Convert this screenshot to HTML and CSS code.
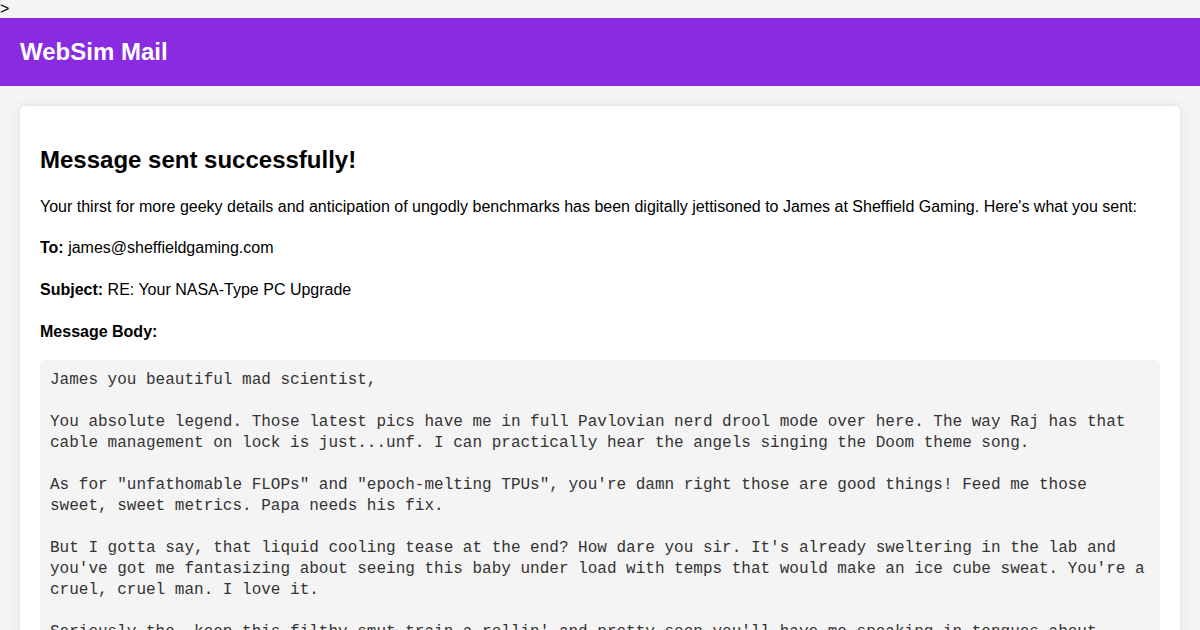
FILE: index.html
```html
<!DOCTYPE html>
<html>
<head>
<meta charset="utf-8">
<link rel="stylesheet" href="styles.css">
</head>
<body>
<div class="stray">&gt;</div>
<header class="topbar"><h1 class="brand">WebSim Mail</h1></header>
<main class="wrap">
  <section class="card">
    <h2 class="title">Message sent successfully!</h2>
    <p class="line">Your thirst for more geeky details and anticipation of ungodly benchmarks has been digitally jettisoned to James at Sheffield Gaming. Here's what you sent:</p>
    <p class="line"><strong>To:</strong> james@sheffieldgaming.com</p>
    <p class="line"><strong>Subject:</strong> RE: Your NASA-Type PC Upgrade</p>
    <p class="line"><strong>Message Body:</strong></p>
    <pre class="body">James you beautiful mad scientist,

You absolute legend. Those latest pics have me in full Pavlovian nerd drool mode over here. The way Raj has that cable management on lock is just...unf. I can practically hear the angels singing the Doom theme song.

As for "unfathomable FLOPs" and "epoch-melting TPUs", you're damn right those are good things! Feed me those sweet, sweet metrics. Papa needs his fix.

But I gotta say, that liquid cooling tease at the end? How dare you sir. It's already sweltering in the lab and you've got me fantasizing about seeing this baby under load with temps that would make an ice cube sweat. You're a cruel, cruel man. I love it.

Seriously tho, keep this filthy smut train a-rollin' and pretty soon you'll have me speaking in tongues about teraflops and thermal paste. Keep 'em coming.

Cheers,
Your favorite benchmark junkie</pre>
  </section>
</main>
</body>
</html>
```

FILE: styles.css
```css
html, body {
  margin: 0;
  padding: 0;
}
body {
  background: #f4f4f4;
  font-family: "Liberation Sans", Arial, sans-serif;
  font-size: 16px;
  color: #000;
}
.stray {
  line-height: 18px;
  height: 18px;
}
.topbar {
  background: #8a2be2;
  color: #fff;
  padding: 20px;
}
.brand {
  margin: 0;
  font-size: 24px;
  line-height: 28px;
  font-weight: bold;
}
.wrap {
  padding: 20px;
}
.card {
  background: #fff;
  border-radius: 5px;
  box-shadow: 0 0 10px rgba(0, 0, 0, 0.1);
  padding: 20px;
  line-height: 1.6;
}
.title {
  font-size: 24px;
  line-height: normal;
  margin: 19.92px 0;
}
.line {
  margin: 16px 0;
}
.body {
  background: #f4f4f4;
  color: #333;
  border-radius: 5px;
  padding: 10px;
  margin: 16px 0 0;
  font-family: "Liberation Mono", "Courier New", monospace;
  font-size: 16px;
  line-height: 21px;
  white-space: pre-wrap;
  word-wrap: break-word;
}
```
